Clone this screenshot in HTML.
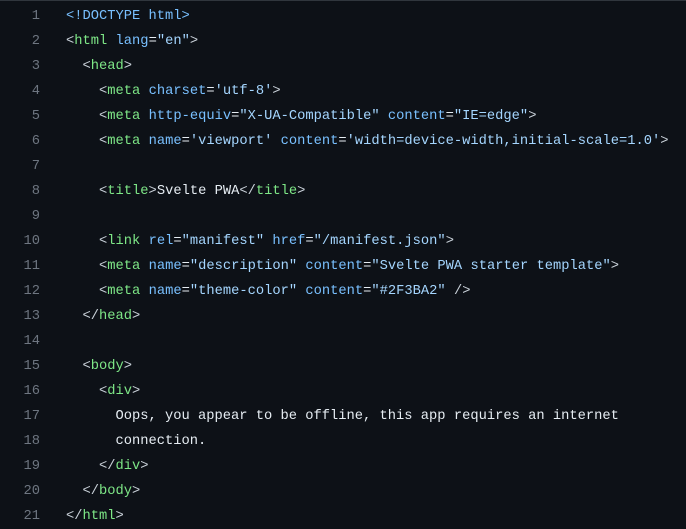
<!DOCTYPE html>
<html><head><style>
body{margin:0;width:686px;height:528px;background:#0d1117;overflow:hidden;border-top:1px solid #30363d;box-sizing:border-box}
pre{margin:0;position:absolute;top:4px;left:0;font-family:"Liberation Mono",monospace;font-size:13.75px;line-height:25px;color:#e6edf3}
.n{display:inline-block;width:40px;text-align:right;color:#6e7681;margin-right:26px}
.t{color:#7ee787}.a{color:#79c0ff}.s{color:#a5d6ff}.p{color:#c9d1d9}
</style></head><body><pre>
<span class="n">1</span><span class="a">&lt;!DOCTYPE html&gt;</span>
<span class="n">2</span><span class="p">&lt;</span><span class="t">html</span> <span class="a">lang</span>=<span class="s">"en"</span><span class="p">&gt;</span>
<span class="n">3</span>  <span class="p">&lt;</span><span class="t">head</span><span class="p">&gt;</span>
<span class="n">4</span>    <span class="p">&lt;</span><span class="t">meta</span> <span class="a">charset</span>=<span class="s">'utf-8'</span><span class="p">&gt;</span>
<span class="n">5</span>    <span class="p">&lt;</span><span class="t">meta</span> <span class="a">http-equiv</span>=<span class="s">"X-UA-Compatible"</span> <span class="a">content</span>=<span class="s">"IE=edge"</span><span class="p">&gt;</span>
<span class="n">6</span>    <span class="p">&lt;</span><span class="t">meta</span> <span class="a">name</span>=<span class="s">'viewport'</span> <span class="a">content</span>=<span class="s">'width=device-width,initial-scale=1.0'</span><span class="p">&gt;</span>
<span class="n">7</span>
<span class="n">8</span>    <span class="p">&lt;</span><span class="t">title</span><span class="p">&gt;</span>Svelte PWA<span class="p">&lt;/</span><span class="t">title</span><span class="p">&gt;</span>
<span class="n">9</span>
<span class="n">10</span>    <span class="p">&lt;</span><span class="t">link</span> <span class="a">rel</span>=<span class="s">"manifest"</span> <span class="a">href</span>=<span class="s">"/manifest.json"</span><span class="p">&gt;</span>
<span class="n">11</span>    <span class="p">&lt;</span><span class="t">meta</span> <span class="a">name</span>=<span class="s">"description"</span> <span class="a">content</span>=<span class="s">"Svelte PWA starter template"</span><span class="p">&gt;</span>
<span class="n">12</span>    <span class="p">&lt;</span><span class="t">meta</span> <span class="a">name</span>=<span class="s">"theme-color"</span> <span class="a">content</span>=<span class="s">"#2F3BA2"</span> <span class="p">/&gt;</span>
<span class="n">13</span>  <span class="p">&lt;/</span><span class="t">head</span><span class="p">&gt;</span>
<span class="n">14</span>
<span class="n">15</span>  <span class="p">&lt;</span><span class="t">body</span><span class="p">&gt;</span>
<span class="n">16</span>    <span class="p">&lt;</span><span class="t">div</span><span class="p">&gt;</span>
<span class="n">17</span>      Oops, you appear to be offline, this app requires an internet
<span class="n">18</span>      connection.
<span class="n">19</span>    <span class="p">&lt;/</span><span class="t">div</span><span class="p">&gt;</span>
<span class="n">20</span>  <span class="p">&lt;/</span><span class="t">body</span><span class="p">&gt;</span>
<span class="n">21</span><span class="p">&lt;/</span><span class="t">html</span><span class="p">&gt;</span>
</pre></body></html>
